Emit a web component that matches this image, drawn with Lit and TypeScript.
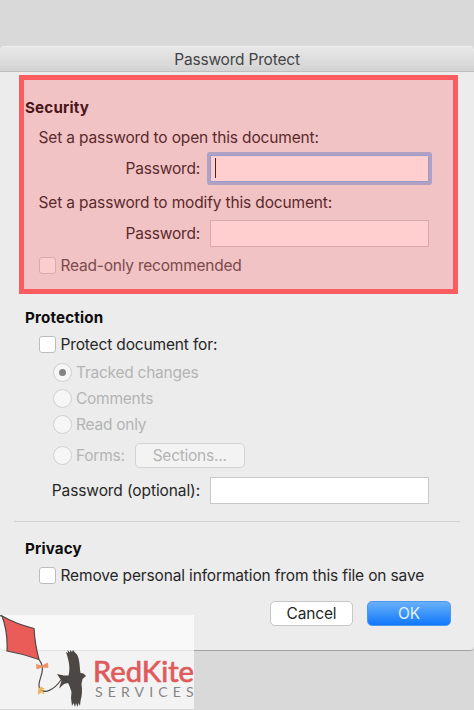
import { LitElement, html, css } from "lit";
import { customElement, property, state } from "lit/decorators.js";

@customElement("kite-logo")
export class KiteLogo extends LitElement {
  static styles = css`
    :host {
      display: block;
      width: 194px;
      height: 94px;
      background: rgba(255, 255, 255, 0.68);
      letter-spacing: 0;
    }
    svg {
      display: block;
      overflow: hidden;
    }
    .name {
      font: 400 28.5px Lato, sans-serif;
      fill: #df5a5b;
      stroke: #df5a5b;
      stroke-width: 0.7;
    }
    .sub {
      font: 400 14px Lato, sans-serif;
      fill: #858585;
    }
  `;

  render() {
    return html`
      <svg width="200" height="94" viewBox="0 615 200 94">
        <!-- kite and its string -->
        <path d="M2 616 Q16 624 34 628.500 Q35 645 39 659.500 Q24 654 7 651 Q8 632 2 616Z" fill="#e95c58" stroke="#514947" stroke-width="1.200" />
        <path d="M0 615.500 L3 616.500 M39 659.500 C48 671 36 681 39.500 688 C44 695 54 690 61 680" fill="none" stroke="#514947" stroke-width="1.200" />
        <path d="M36.500 664.500 L42 666 L47.500 663 L48 667.500 L42 667 L37 669Z" fill="#ee9164" stroke="#ee9164" stroke-width="0.800" />
        <path d="M39 688 L42.500 690.500 L41 687.500 L44.500 689 M39 688 L38.500 693.500 L42 691.500 L44 694" fill="#eeb55c" stroke="#eeb55c" stroke-width="1.300" />
        <!-- bird -->
        <path d="M66 652 L68 653 L67.500 650 L70 652.500 L70 650 L72 652 L73 650 L74.500 652 L77 654.500 C80 660 79.500 667 80.500 673 L83.500 673.500 L86 676 L82.500 679 L81.500 684 C82.500 690 82 696 80.500 701 L80 706 L78.500 703 L77.500 707 L76 703 L75 707 L73.500 703 L72 706 L71 698 L71.500 692 L69.500 686 L68 683 L64 684 L59 688.500 L61.500 681 L57 674 L64 675.500 L68.500 675.500 C70.500 668 69 661 66 652Z" fill="#4b4745" />
        <text class="name" x="93" y="681.500" textLength="101" lengthAdjust="spacingAndGlyphs">RedKite</text>
        <text class="sub" x="95" y="697" textLength="98.500" lengthAdjust="spacing">SERVICES</text>
      </svg>
    `;
  }
}

@customElement("option-box")
export class OptionBox extends LitElement {
  @property() kind = "checkbox";
  @property({ type: Boolean }) checked = false;

  static styles = css`
    :host {
      display: flex;
      flex: none;
    }
    .checkbox {
      box-sizing: border-box;
      width: 17px;
      height: 17px;
      border: 1px solid var(--box-line, #bdbdbd);
      border-radius: 3px;
      background: var(--box-fill, #fff);
    }
    .radio {
      box-sizing: border-box;
      display: flex;
      align-items: center;
      justify-content: center;
      width: 19px;
      height: 19px;
      border: 1.5px solid #cfcfcf;
      border-radius: 50%;
      background: #f6f6f6;
    }
    .dot {
      width: 7px;
      height: 7px;
      border-radius: 50%;
      background: #848484;
    }
  `;

  render() {
    return html`<div class=${this.kind}>
      ${this.checked ? html`<span class="dot"></span>` : ""}
    </div>`;
  }
}

@customElement("app-root")
export class AppRoot extends LitElement {
  @state() selected = "Tracked changes";

  static styles = css`
    :host {
      display: block;
      position: relative;
      box-sizing: border-box;
      width: 474px;
      height: 710px;
      padding-top: 46px;
      overflow: hidden;
      background: #d9d9d9;
      font-family: Inter, "Liberation Sans", sans-serif;
      font-size: 15.5px;
      letter-spacing: -0.15px;
      color: #272727;
      white-space: nowrap;
    }
    .dialog {
      box-sizing: border-box;
      height: 605px;
      border-bottom: 1px solid #a2a2a2;
      border-radius: 5px 5px 4px 4px;
      background: #ececec;
    }
    .titlebar {
      display: flex;
      align-items: center;
      justify-content: center;
      box-sizing: border-box;
      height: 26px;
      border-top: 1px solid #efefef;
      border-bottom: 1px solid #bebebe;
      border-radius: 5px 5px 0 0;
      background: linear-gradient(#e8e8e8, #d3d3d3);
      color: #444;
    }
    .title {
      letter-spacing: -0.2px;
    }
    .security {
      box-sizing: border-box;
      width: 439px;
      height: 219px;
      margin: 3px 0 0 19px;
      padding: 12px 0 0;
      border: 5px solid #fa5c5f;
      background: #f1c3c4;
      color: #5b2a2d;
      --box-line: #d9a9ab;
      --box-fill: #fbcdce;
    }
    .row {
      display: flex;
      align-items: center;
      box-sizing: border-box;
      height: 30px;
      padding-left: 38.5px;
    }
    .security .row {
      padding-left: 14.5px;
    }
    .row.heading,
    .security .row.heading {
      font-weight: 700;
      font-size: 15.2px;
      letter-spacing: 0.15px;
      color: #0d0d0d;
    }
    .row.heading {
      padding-left: 25px;
    }
    .security .row.heading {
      padding-left: 1px;
      color: #4b171a;
    }
    .row option-box + span {
      margin-left: 5px;
    }
    .row.entry,
    .security .row.entry {
      padding-left: 0;
    }
    .label {
      width: 200px;
      margin-right: 10px;
      text-align: right;
      letter-spacing: -0.1px;
    }
    .security .label {
      width: 176px;
      letter-spacing: -0.2px;
    }
    .field {
      display: flex;
      align-items: center;
      box-sizing: border-box;
      width: 219px;
      height: 27px;
      border: 1px solid #c9c9c9;
      background: #fff;
    }
    .security .field {
      border-color: #d9a9ab;
      background: #ffcfcf;
    }
    .security .field.focused {
      border-color: #9a9bc9;
      box-shadow: 0 0 0 3px #b0a0c4;
      border-radius: 1px;
    }
    .caret {
      width: 1px;
      height: 20px;
      margin-left: 4px;
      background: #4f2023;
    }
    .faded {
      color: #7b4a4d;
      letter-spacing: -0.22px;
    }
    .h24 { height: 24px; }
    .h25 { height: 25px; }
    .h27 { height: 27px; }
    .h32 { height: 32px; }
    .h35 { height: 35px; }
    .h36 { height: 36px; }
    .protection {
      padding-top: 8px;
    }
    .choices {
      padding-top: 2px;
      color: #b4b4b4;
      letter-spacing: -0.25px;
    }
    .choices .row {
      height: 26px;
      padding-left: 53px;
    }
    .choices .row.forms {
      height: 36px;
    }
    .choices .row option-box + span {
      margin-left: 4px;
    }
    .button {
      display: flex;
      align-items: center;
      justify-content: center;
      box-sizing: border-box;
      width: 83px;
      height: 25px;
      border: 1px solid #c6c6c6;
      border-radius: 5px;
      background: #fff;
    }
    .button.sections {
      width: 110px;
      margin-left: 10px;
      border-color: #d3d3d3;
      background: #f3f3f3;
    }
    .button.primary {
      width: 84px;
      border-color: #4a98f2;
      background: linear-gradient(#69b0f8, #1078fb);
      color: #e4f2ff;
    }
    .divider {
      height: 1px;
      margin: 13px 14px 11px;
      background: #d2d2d2;
    }
    .actions {
      display: flex;
      justify-content: flex-end;
      gap: 14px;
      padding: 14px 23px 0 0;
    }
    kite-logo {
      position: absolute;
      left: 0;
      top: 615px;
    }
  `;

  renderChoice(name: string) {
    return html`
      <div class="row" @click=${() => (this.selected = name)}>
        <option-box kind="radio" ?checked=${this.selected === name}></option-box>
        <span>${name}</span>
      </div>
    `;
  }

  render() {
    return html`
      <div class="dialog">
        <div class="titlebar"><span class="title">Password Protect</span></div>

        <div class="security">
          <div class="row heading">Security</div>
          <div class="row">Set a password to open this document:</div>
          <div class="row entry h32">
            <span class="label">Password:</span>
            <div class="field focused"><span class="caret"></span></div>
          </div>
          <div class="row h36">Set a password to modify this document:</div>
          <div class="row entry h27">
            <span class="label">Password:</span>
            <div class="field"></div>
          </div>
          <div class="row h36 faded">
            <option-box></option-box><span>Read-only recommended</span>
          </div>
        </div>

        <div class="protection">
          <div class="row heading">Protection</div>
          <div class="row h25">
            <option-box></option-box><span>Protect document for:</span>
          </div>
          <div class="choices">
            ${["Tracked changes", "Comments", "Read only"].map((c) => this.renderChoice(c))}
            <div class="row forms">
              <option-box kind="radio"></option-box><span>Forms:</span>
              <div class="button sections">Sections...</div>
            </div>
          </div>
          <div class="row entry h35">
            <span class="label">Password (optional):</span>
            <div class="field"></div>
          </div>
        </div>

        <div class="divider"></div>

        <div class="row heading">Privacy</div>
        <div class="row h24">
          <option-box></option-box><span>Remove personal information from this file on save</span>
        </div>
        <div class="actions">
          <div class="button">Cancel</div>
          <div class="button primary">OK</div>
        </div>
      </div>
      <kite-logo></kite-logo>
    `;
  }
}
